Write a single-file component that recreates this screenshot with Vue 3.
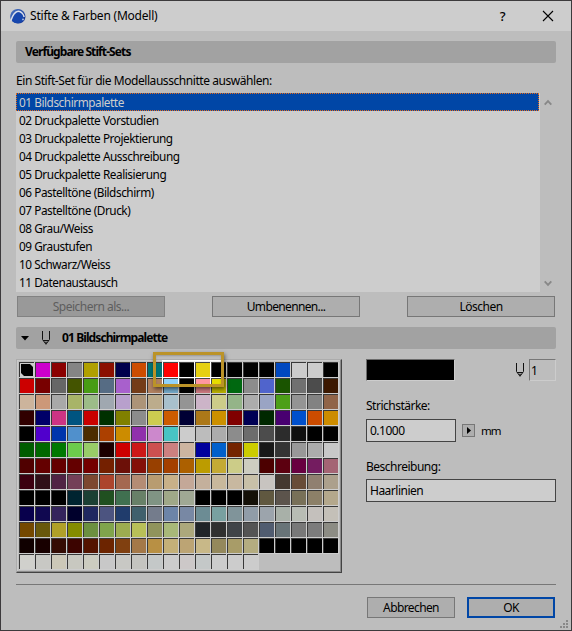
<script setup>
const sets = [
  '01 Bildschirmpalette', '02 Druckpalette Vorstudien', '03 Druckpalette Projektierung',
  '04 Druckpalette Ausschreibung', '05 Druckpalette Realisierung', '06 Pastelltöne (Bildschirm)',
  '07 Pastelltöne (Druck)', '08 Grau/Weiss', '09 Graustufen', '10 Schwarz/Weiss', '11 Datenaustausch',
]
const palette = [
  '000000 cc00cc 8b0000 858585 b0a000 8b1000 00004c cc4c00 007474 ff0000 000000 b8a60e 000000 000000 000000 000000 0048c0 cccccc cccccc 000000',
  'cc0000 780000 666666 445400 489c14 566c84 a860cc 743c18 b08060 73a8c8 000000 cc7880 b8b000 006810 8c8c8c 5064cc 1a5400 707070 4c4c4c 3c1800',
  'ccb49c cc9878 a8a8a8 a8b468 9cbc88 a0a8b0 b8a0cc ac9478 bcac8c a8c0cc 949494 ccb4c8 cccc88 94b488 acacac 9aa4c4 4c9f18 949494 828282 906448',
  '300000 000068 cc3484 005480 c80000 003000 808000 8c8c8c cccc50 cc5c00 000034 ac7818 cc9000 800000 000054 002800 480070 0050cc cc4c00 cc8c00',
  '000000 5000cc 0034ac 5090cc 4c2c00 ac4000 cc8c00 9030ac cc88cc 48c4c4 cccccc bcbcbc acacac 8c8c8c 6c6c6c 4c4c4c 2c2c2c 101010 000000 000000',
  '005c00 006800 007800 6ccc4c 98cc68 1c0000 cc0000 cc1818 cc5050 cc8080 ccb4a0 00009c 0060cc 742400 cccc00 181818 343434 989898 acacac c8c8c8',
  '500000 640000 640000 640000 740000 742000 6c1008 841008 984000 a44000 ac6000 bc9c00 c4aa34 cccc88 ccccc0 4c0000 5c0010 680040 741c60 a46474',
  '3c0010 301018 502444 744058 7c4830 ac442c a46850 b48c74 b89c70 c8b088 c4a898 c4b09c c8b89c c8b8a0 c8c0a8 c8c4c0 443830 684c38 908070 aca08c',
  '000000 000000 000000 002430 1c4034 205020 407050 688068 809484 a0a888 a0a894 000000 000000 000000 141008 605840 5c544c 787058 8c8068 b4a88c',
  '08004c 100850 34245c 00002c 202860 4c5480 203c6c 40606c 747c8c 6c84a8 7888a4 6c8c94 78a0a0 80949a 909ca8 9ca4ac a8b0a8 b8bcb4 c4c0bc c4c0b8',
  '744800 68580c b0a028 848c00 6c9040 80a44c 9cac50 b8c058 90945c a8b878 aca87c 202428 303030 404448 545454 505c70 687478 787878 7c7c7c 8c8c84',
  '100000 180000 340c04 3c0400 541400 6c2400 804010 a47848 b89044 c4b078 bca474 c8b888 94885c a89c68 b4ac80 000000 000000 000000 000000 000000',
  'd0d0cc c8c8c4 ccc8b8 c8c8c0 ccccc0 c8c8c8 c8c8c4 c4c4c0 c4c8c8 cccccc ccc8c8 c4c8c8 cccccc cccccc cccccc',
].flatMap(r => r.split(' '))
</script>

<template>
  <main class="dialog">
    <header class="titlebar">
      <svg class="logo" width="16" height="16" viewBox="0 0 16 16">
        <defs><linearGradient id="orb" x1="0" y1="0" x2="1" y2="1"><stop stop-color="#4b77c5" /><stop offset="1" stop-color="#092888" /></linearGradient></defs>
        <path d="M.8 11.5A7.6 7.6 0 1 1 14.6 12Q13 15 8 15.6Q4 15.6 .8 11.5Z" fill="url(#orb)" />
        <path d="M.8 12.8Q3.6 3.6 8.4 3.2Q12.4 3.4 14.2 9" fill="none" stroke="#d9dfec" stroke-width="1.5" />
        <path d="M2 13Q4.6 4.8 8.4 4.3Q12.3 5 13.7 11Q12.6 15 8 15.2Q4 15.2 2 13Z" fill="#1646ad" />
        <circle cx="13" cy="11.4" r=".9" fill="#b6c7e7" />
      </svg>
      <h1>Stifte &amp; Farben (Modell)</h1>
      <span class="help">?</span>
      <svg class="close" width="12" height="12" viewBox="0 0 12 12"><path d="M1 1 11 11M11 1 1 11" fill="none" stroke="#000" stroke-width="1.1" /></svg>
    </header>

    <section class="body">
      <h2 class="band first"><span class="avail">Verfügbare Stift-Sets</span></h2>
      <p class="prompt"><span>Ein Stift-Set für die Modellausschnitte auswählen:</span></p>
      <div class="listwrap">
        <ul class="list">
          <li v-for="(s, i) in sets" :key="s" :class="{ active: i === 0 }">{{ s }}</li>
        </ul>
        <div class="scroll">
          <svg width="8" height="7" viewBox="0 0 8 7"><path d="M.7 5.6 4 2.2 7.3 5.6" /></svg>
          <svg width="8" height="7" viewBox="0 0 8 7"><path d="M.7 1.4 4 4.8 7.3 1.4" /></svg>
        </div>
      </div>
      <div class="actions">
        <button class="disabled">Speichern als...</button>
        <button class="rename">Umbenennen...</button>
        <button>Löschen</button>
      </div>
      <h2 class="band second">
        <svg class="tri" width="8" height="5" viewBox="0 0 8 5"><path d="M0 0H8L4 4.6Z" /></svg>
        <svg class="pen" width="8" height="14" viewBox="0 0 8 14"><path d="M.5 0V8.5L4 13.3 7.5 8.5V0M1 9.5H7" /><path class="nib" d="M2.5 10.7H5.5L4 13Z" /></svg>
        <span class="setname">01 Bildschirmpalette</span>
      </h2>

      <div class="editor">
        <div class="palette">
          <i v-for="(c, i) in palette" :key="i" class="cell" :class="{ picked: i === 0 }"><b :style="{ background: '#' + c }"></b></i>
          <div class="marker"></div>
        </div>
        <div class="props">
          <div class="top">
            <div class="preview"></div>
            <svg class="pen" width="8" height="14" viewBox="0 0 8 14"><path d="M.5 0V8.5L4 13.3 7.5 8.5V0M1 9.5H7" /><path class="nib" d="M2.5 10.7H5.5L4 13Z" /></svg>
            <div class="number">1</div>
          </div>
          <label class="l1">Strichstärke:</label>
          <div class="weight">
            <div class="field small">0.1000</div>
            <div class="step"><svg width="4" height="7" viewBox="0 0 4 7"><path d="M0 0 4 3.5 0 7Z" /></svg></div>
            <span class="unit">mm</span>
          </div>
          <label class="l2">Beschreibung:</label>
          <div class="field">Haarlinien</div>
        </div>
      </div>

      <footer class="footer">
        <button>Abbrechen</button>
        <button class="ok">OK</button>
      </footer>
    </section>
    <svg class="grip" width="8" height="8" viewBox="0 0 8 8"><path d="M6 0h2v2H6zM3 3h2v2H3zM6 3h2v2H6zM0 6h2v2H0zM3 6h2v2H3zM6 6h2v2H6z" /></svg>
  </main>
</template>

<style>
body { margin: 0; background: #bdbdbd; }
</style>
<style scoped>
* { box-sizing: border-box; }
.dialog { position: relative; width: 572px; height: 631px; border: 1px solid #3c3a3c; background: #bdbdbd; color: #000; font: 12px/18px "Noto Sans", "Open Sans", sans-serif; letter-spacing: -0.5px; white-space: nowrap; }
h1, h2, p, ul { margin: 0; padding: 0; font-size: 12px; list-style: none; }
.titlebar { height: 30px; background: #cdcdcd; display: flex; align-items: center; padding: 0 17px 0 9px; }
h1 { font-weight: 400; margin-left: 4px; flex: 1; letter-spacing: -0.21px; }
.help { margin-right: 37px; font-size: 13px; font-weight: 500; }
.body { padding: 10px 15px 0; }
.band { height: 22px; border-radius: 2px; background: #a2a2a2; display: flex; align-items: center; font-weight: 700; letter-spacing: -0.9px; }
.first { padding-left: 9px; }
.prompt { height: 30px; padding-top: 9px; letter-spacing: -0.44px; }
.listwrap { display: flex; height: 199px; }
.list { width: 524px; background: #cdcdcd; font-size: 11.8px; letter-spacing: -0.45px; }
.list li { height: 18px; line-height: 18px; padding-left: 3px; }
.list li.active { width: 523px; background: #0046a6; color: #cdcdcd; outline: 1px dotted #e66a16; outline-offset: -1px; }
.scroll { width: 16px; display: flex; flex-direction: column; justify-content: space-between; align-items: center; padding: 6px 0 5px; }
.scroll path { fill: none; stroke: #888; stroke-width: 1.9; }
.actions { display: flex; justify-content: space-between; padding: 4px 1px 0; }
button { width: 148px; height: 21px; padding: 1px 0 0; border: 1px solid #777; border-radius: 0; background: #aeaeae; color: #000; font: inherit; letter-spacing: inherit; line-height: 18px; }
.rename { letter-spacing: -0.65px; }
.disabled { background: #999; border-color: #828282; color: #5e5e5e; }
.second { margin-top: 10px; padding-left: 5px; }
.tri { margin: 0 13px 0 0; }
.pen path { fill: none; stroke: #111; }
.pen .nib { fill: #333; stroke: none; }
.setname { margin-left: 12px; }
.editor { display: flex; padding-top: 10px; height: 235px; }
.palette { position: relative; width: 326px; height: 214px; display: grid; grid-template-columns: repeat(20, 16px); grid-auto-rows: 16px; padding: 2px; border: 1px solid #acacac; border-right-color: #434343; border-bottom-color: #434343; box-shadow: inset -1px -1px #8a8a8a, inset 1px 1px #cacaca; }
.cell { border: 1px solid #cdcdcd; border-width: 0 1px 1px 0; }
.cell b { display: block; width: 15px; height: 15px; border: 1px solid #383838; border-width: 1px 0 0 1px; }
.picked b { border-color: #333; position: relative; }
.picked b::after { content: ""; display: block; width: 14px; height: 14px; background: #cdcdcd; }
.picked b::before { content: ""; position: absolute; left: 1px; top: 1px; width: 12px; height: 12px; background: #000; clip-path: polygon(0 0, 75% 0, 100% 25%, 100% 100%, 25% 100%, 0 75%); }
.marker { position: absolute; left: 136px; top: -8px; width: 71px; height: 35px; border: 3px solid #bb9328; box-shadow: 1px 2px 4px #0008, inset 0 1px 2px #0003; }
.marker::after { content: ""; position: absolute; inset: 5px 0 0 6px; backdrop-filter: brightness(1.25); }
.props { width: 190px; margin-left: 24px; }
.top { display: flex; align-items: flex-start; }
.preview { width: 89px; height: 22px; border: 1px solid #6c6c6c; border-right-color: #cdcdcd; border-bottom-color: #cdcdcd; background: #000; }
.top .pen { margin: 4px 5px 0 61px; }
.number { width: 27px; height: 22px; border: 1px solid #777; border-right-color: #ccc; border-bottom-color: #ccc; line-height: 22px; padding-left: 1px; }
label { display: block; height: 18px; }
.l1 { margin-top: 16px; margin-bottom: 4px; }
.l2 { margin-top: 16px; margin-bottom: 3px; }
.weight { display: flex; align-items: center; }
.field { height: 23px; border: 1px solid #444; background: #cdcdcd; line-height: 22px; padding-left: 3px; }
.small { width: 90px; }
.step { width: 13px; height: 13px; margin: 0 6px; border: 1px solid #777; background: #aeaeae; display: grid; place-items: center; }
.unit { font-size: 11.5px; letter-spacing: -1px; }
.footer { border-top: 1px solid #777; display: flex; justify-content: flex-end; gap: 12px; padding: 12px 1px 0 0; }
.footer button { width: 88px; letter-spacing: -0.6px; }
.footer .ok { border: 2px solid #0046a6; line-height: 16px; }
.grip { position: absolute; right: 3px; bottom: 2px; fill: #898989; }
</style>
